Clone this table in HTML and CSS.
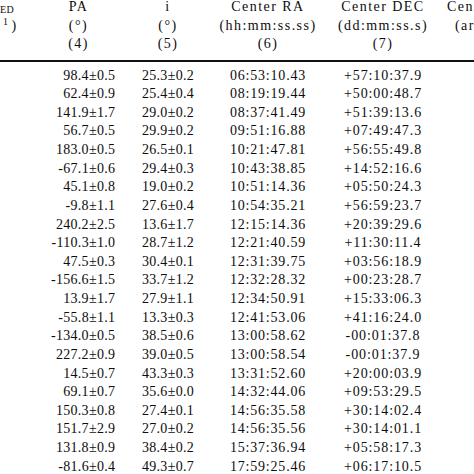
FILE: index.html
```html
<!DOCTYPE html>
<html>
<head>
<meta charset="utf-8">
<link rel="stylesheet" href="styles.css">
</head>
<body>
<table class="tbl">
  <colgroup>
    <col class="w1"><col class="w2"><col class="w3"><col class="w4"><col class="w5"><col class="w6">
  </colgroup>
  <thead>
    <tr>
      <th class="h-first"><div><span class="sub">ED</span></div><div><span class="sup">1</span> )</div><div>&nbsp;</div></th>
      <th class="h-pa"><div>PA</div><div>(°)</div><div>(4)</div></th>
      <th class="h-i"><div>i</div><div>(°)</div><div>(5)</div></th>
      <th class="h-ra"><div>Center RA</div><div>(hh:mm:ss.ss)</div><div>(6)</div></th>
      <th class="h-dec"><div>Center DEC</div><div>(dd:mm:ss.s)</div><div>(7)</div></th>
      <th class="h-last"><div>Center Offset</div><div class="ind2">(arcsec)</div><div>&nbsp;</div></th>
    </tr>
  </thead>
  <tbody>
    <tr><td></td><td>98.4±0.5</td><td>25.3±0.2</td><td>06:53:10.43</td><td>+57:10:37.9</td><td></td></tr>
    <tr><td></td><td>62.4±0.9</td><td>25.4±0.4</td><td>08:19:19.44</td><td>+50:00:48.7</td><td></td></tr>
    <tr><td></td><td>141.9±1.7</td><td>29.0±0.2</td><td>08:37:41.49</td><td>+51:39:13.6</td><td></td></tr>
    <tr><td></td><td>56.7±0.5</td><td>29.9±0.2</td><td>09:51:16.88</td><td>+07:49:47.3</td><td></td></tr>
    <tr><td></td><td>183.0±0.5</td><td>26.5±0.1</td><td>10:21:47.81</td><td>+56:55:49.8</td><td></td></tr>
    <tr><td></td><td>-67.1±0.6</td><td>29.4±0.3</td><td>10:43:38.85</td><td>+14:52:16.6</td><td></td></tr>
    <tr><td></td><td>45.1±0.8</td><td>19.0±0.2</td><td>10:51:14.36</td><td>+05:50:24.3</td><td></td></tr>
    <tr><td></td><td>-9.8±1.1</td><td>27.6±0.4</td><td>10:54:35.21</td><td>+56:59:23.7</td><td></td></tr>
    <tr><td></td><td>240.2±2.5</td><td>13.6±1.7</td><td>12:15:14.36</td><td>+20:39:29.6</td><td></td></tr>
    <tr><td></td><td>-110.3±1.0</td><td>28.7±1.2</td><td>12:21:40.59</td><td>+11:30:11.4</td><td></td></tr>
    <tr><td></td><td>47.5±0.3</td><td>30.4±0.1</td><td>12:31:39.75</td><td>+03:56:18.9</td><td></td></tr>
    <tr><td></td><td>-156.6±1.5</td><td>33.7±1.2</td><td>12:32:28.32</td><td>+00:23:28.7</td><td></td></tr>
    <tr><td></td><td>13.9±1.7</td><td>27.9±1.1</td><td>12:34:50.91</td><td>+15:33:06.3</td><td></td></tr>
    <tr><td></td><td>-55.8±1.1</td><td>13.3±0.3</td><td>12:41:53.06</td><td>+41:16:24.0</td><td></td></tr>
    <tr><td></td><td>-134.0±0.5</td><td>38.5±0.6</td><td>13:00:58.62</td><td>-00:01:37.8</td><td></td></tr>
    <tr><td></td><td>227.2±0.9</td><td>39.0±0.5</td><td>13:00:58.54</td><td>-00:01:37.9</td><td></td></tr>
    <tr><td></td><td>14.5±0.7</td><td>43.3±0.3</td><td>13:31:52.60</td><td>+20:00:03.9</td><td></td></tr>
    <tr><td></td><td>69.1±0.7</td><td>35.6±0.0</td><td>14:32:44.06</td><td>+09:53:29.5</td><td></td></tr>
    <tr><td></td><td>150.3±0.8</td><td>27.4±0.1</td><td>14:56:35.58</td><td>+30:14:02.4</td><td></td></tr>
    <tr><td></td><td>151.7±2.9</td><td>27.0±0.2</td><td>14:56:35.56</td><td>+30:14:01.1</td><td></td></tr>
    <tr><td></td><td>131.8±0.9</td><td>38.4±0.2</td><td>15:37:36.94</td><td>+05:58:17.3</td><td></td></tr>
    <tr><td></td><td>-81.6±0.4</td><td>49.3±0.7</td><td>17:59:25.46</td><td>+06:17:10.5</td><td></td></tr>
  </tbody>
</table>
</body>
</html>
```

FILE: styles.css
```css
html, body {
  margin: 0;
  padding: 0;
  background: #ffffff;
  overflow: hidden;
  width: 474px;
  height: 474px;
}

.tbl {
  font-family: "Liberation Serif", "Times New Roman", serif;
  font-size: 14px;
  color: #0d0d0d;
  border-collapse: separate;
  border-spacing: 0;
  table-layout: fixed;
  width: 541px;
  margin-top: -2px;
}

.w1 { width: 32px; }
.w2 { width: 93px; }
.w3 { width: 86px; }
.w4 { width: 114px; }
.w5 { width: 116px; }
.w6 { width: 100px; }

.tbl th {
  font-weight: normal;
  vertical-align: top;
  line-height: 18.5px;
  padding: 0 0 6.5px 0;
  border-bottom: 2px solid #111111;
  letter-spacing: 1.45px;
  text-align: center;
  white-space: nowrap;
}

.tbl th div {
  height: 18.5px;
}

.tbl .h-first {
  text-align: left;
  letter-spacing: 0;
}

.sub {
  font-size: 10px;
  line-height: 0;
  vertical-align: -1.5px;
  letter-spacing: 0.3px;
}

.sup {
  font-size: 10px;
  line-height: 0;
  vertical-align: 4.5px;
  margin-left: 3px;
}

.tbl .h-pa { padding-left: 10px; padding-right: 10px; }
.tbl .h-i { padding-left: 14px; padding-right: 14px; }
.tbl .h-last { text-align: left; padding-left: 6px; }

.ind2 { padding-left: 8px; }

.tbl td {
  padding: 0;
  line-height: 18.62px;
  white-space: nowrap;
  text-align: center;
}

.tbl tbody tr:first-child td {
  padding-top: 4.6px;
}

.tbl td:nth-child(2) {
  text-align: right;
  padding-right: 9.7px;
  letter-spacing: 0.3px;
}

.tbl td:nth-child(3) {
  letter-spacing: 0.3px;
}

.tbl td:nth-child(4) {
  letter-spacing: 0.8px;
}

.tbl td:nth-child(5) {
  letter-spacing: 0.9px;
}
```
